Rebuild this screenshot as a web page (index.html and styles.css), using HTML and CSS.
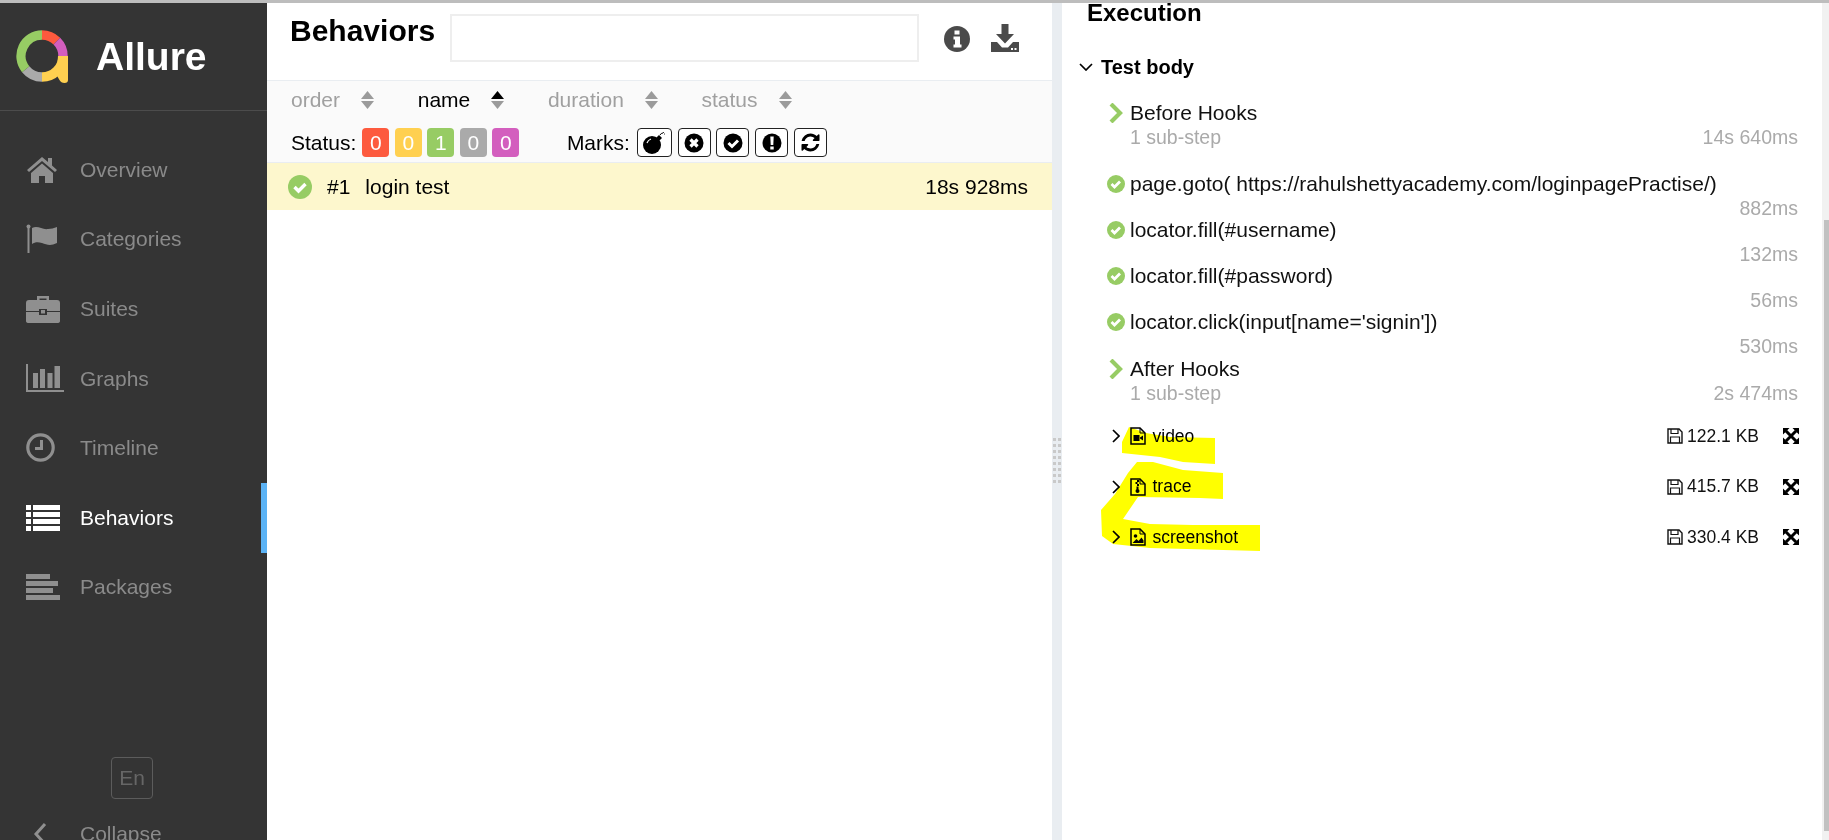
FILE: index.html
```html
<!DOCTYPE html>
<html lang="en">
<head>
<meta charset="utf-8">
<title>Allure Report</title>
<link rel="stylesheet" href="styles.css">
</head>
<body>
<div class="app">
  <aside class="sidebar">
    <div class="brand">
      <svg class="logo" viewBox="0 0 54 54" width="54" height="54">
        <g fill="none" stroke-width="9.4">
          <path stroke="#fd5a3e" d="M26 5A21 21 0 0 1 40.85 11.15"/>
          <path stroke="#d35ebe" d="M40.85 11.15A21 21 0 0 1 47 26"/>
          <path stroke="#ffd050" d="M47 26A21 21 0 0 1 26 47"/>
          <path stroke="#aaaaaa" d="M26 47A21 21 0 0 1 9.7 39.2"/>
          <path stroke="#97cc64" d="M9.7 39.2A21 21 0 0 1 26 5"/>
        </g>
        <path fill="#ffd050" d="M42 26h10v24q0 3-3.5 3t-5-3l-3-5z"/>
      </svg>
      <span class="brand-name">Allure</span>
    </div>
    <nav class="nav">
      <a class="nav-item">
        <span class="nav-icon"><svg viewBox="0 0 32 28" width="32" height="28"><path d="M16 1 1 14l2 2L16 5l13 11 2-2-5-4.5V2h-4v4zM5 17v10h8v-7h6v7h8V17L16 7.5z"/></svg></span>
        <span>Overview</span>
      </a>
      <a class="nav-item">
        <span class="nav-icon"><svg viewBox="0 0 34 30" width="34" height="30"><path d="M1.500 3h2v26h-2z"/><circle cx="2.500" cy="2.500" r="2"/><path d="M6 4c6-3 10 2 16 1 3 0 6-1 9-2v16c-6 3-10 2-15 0-4-1-7-1-10 1z"/></svg></span>
        <span>Categories</span>
      </a>
      <a class="nav-item">
        <span class="nav-icon"><svg viewBox="0 0 34 30" width="34" height="30"><path d="M11 6V2h12v4h8q3 0 3 3v8H21v-2h-8v2H0V9q0-3 3-3zm2.500 0h7V4.500h-7zM0 18h13v3h8v-3h13v9q0 2-3 2H3q-3 0-3-2zm15-2h4v3.500h-4z"/></svg></span>
        <span>Suites</span>
      </a>
      <a class="nav-item">
        <span class="nav-icon"><svg viewBox="0 0 38 30" width="38" height="30"><path d="M0 0h2v26h36v2H0zM7 9h5v15H7zM14 5h5v19h-5zM21.500 9h5v15h-5zM28.500 2h5.500v22h-5.500z"/></svg></span>
        <span>Graphs</span>
      </a>
      <a class="nav-item">
        <span class="nav-icon"><svg viewBox="0 0 30 30" width="30" height="30"><circle cx="14.500" cy="14.500" r="12.700" fill="none" stroke="#8f8f8f" stroke-width="3.200"/><path d="M14 7h3v10h-8v-3h5z"/></svg></span>
        <span>Timeline</span>
      </a>
      <a class="nav-item is-active">
        <span class="nav-icon"><svg viewBox="0 0 34 28" width="34" height="28"><path d="M0 1h5v5H0zM7 1h27v5H7zM0 8h5v5H0zM7 8h27v5H7zM0 15h5v5H0zM7 15h27v5H7zM0 22h5v5H0zM7 22h27v5H7z"/></svg></span>
        <span>Behaviors</span>
      </a>
      <a class="nav-item">
        <span class="nav-icon"><svg viewBox="0 0 34 28" width="34" height="28"><path d="M0 1h24v5H0zM0 8h32v5H0zM0 15h27v5H0zM0 22h34v5H0z"/></svg></span>
        <span>Packages</span>
      </a>
    </nav>
    <div class="side-footer">
      <div class="lang-row"><span class="lang">En</span></div>
      <a class="collapse">
        <svg class="collapse-icon" viewBox="0 0 14 24" width="14" height="24"><path d="M12 2 3 12l9 10" fill="none" stroke="#8f8f8f" stroke-width="3"/></svg>
        <span>Collapse</span>
      </a>
    </div>
  </aside>

  <section class="pane-left">
    <header class="pane-header">
      <h2 class="pane-title">Behaviors</h2>
      <div class="search"></div>
      <svg class="tool tool-info" viewBox="0 0 26 26" width="26" height="26"><circle cx="13" cy="13" r="13" fill="#4a4a4a"/><path fill="#fff" d="M10.500 4.500h5v4h-5zM9.500 10.500h6.500v8h1.500v3h-8v-3H11v-5H9.500z"/></svg>
      <svg class="tool tool-download" viewBox="0 0 28 28" width="28" height="28"><path fill="#4a4a4a" d="M10.500 0h7v10H23L14 19.500 5 10h5.500zM0 18h6l5 5.500h6L22 18h6v10H0z"/><path fill="#fff" d="M20 24h2v2h-2zM23.500 24h2v2h-2z"/></svg>
    </header>
    <div class="toolbar">
      <div class="sort-row">
        <span class="sort"><span>order</span><svg class="sort-arrow" viewBox="0 0 13 18" width="13" height="18"><path class="a-off" d="M0 8 6.500 0 13 8z"/><path class="a-off" d="M0 10h13l-6.500 8z"/></svg></span>
        <span class="sort is-sorted"><span>name</span><svg class="sort-arrow" viewBox="0 0 13 18" width="13" height="18"><path class="a-on" d="M0 8 6.500 0 13 8z"/><path class="a-off" d="M0 10h13l-6.500 8z"/></svg></span>
        <span class="sort"><span>duration</span><svg class="sort-arrow" viewBox="0 0 13 18" width="13" height="18"><path class="a-off" d="M0 8 6.500 0 13 8z"/><path class="a-off" d="M0 10h13l-6.500 8z"/></svg></span>
        <span class="sort"><span>status</span><svg class="sort-arrow" viewBox="0 0 13 18" width="13" height="18"><path class="a-off" d="M0 8 6.500 0 13 8z"/><path class="a-off" d="M0 10h13l-6.500 8z"/></svg></span>
      </div>
      <div class="filter-row">
        <span class="filter-label">Status:</span>
        <span class="badge b-failed">0</span>
        <span class="badge b-broken">0</span>
        <span class="badge b-passed">1</span>
        <span class="badge b-skipped">0</span>
        <span class="badge b-unknown">0</span>
        <span class="filter-label marks-label">Marks:</span>
        <span class="mark mark-wide"><svg viewBox="0 0 24 24" width="24" height="24"><circle cx="10" cy="14" r="9"/><path d="m14 7 3-3 3 3-3 3z"/><path d="M18 4q1-2 3-2" fill="none" stroke="#000"/><path d="m21 1 1 1M22 3l1 0" stroke="#000" stroke-width=".8"/><path d="M5 12q1-3 4-4" fill="none" stroke="#fff" stroke-width="1.200"/></svg></span>
        <span class="mark"><svg viewBox="0 0 20 20" width="20" height="20"><circle cx="10" cy="10" r="9.500"/><path d="m6.500 6.500 7 7m0-7-7 7" stroke="#fff" stroke-width="3.200"/></svg></span>
        <span class="mark"><svg viewBox="0 0 20 20" width="20" height="20"><circle cx="10" cy="10" r="9.500"/><path d="m5.500 10 3.500 3.500 6-6" fill="none" stroke="#fff" stroke-width="3"/></svg></span>
        <span class="mark"><svg viewBox="0 0 20 20" width="20" height="20"><circle cx="10" cy="10" r="9.500"/><path fill="#fff" d="M8.300 3.500h3.400l-.4 8.500H8.700zM8.300 13.500h3.400v3H8.300z"/></svg></span>
        <span class="mark"><svg viewBox="0 0 1792 1792" width="21" height="21"><path d="M1639 1056q0 5-1 7-64 268-268 434.500t-478 166.500q-146 0-282.500-55t-243.500-157l-129 129q-19 19-45 19t-45-19-19-45v-448q0-26 19-45t45-19h448q26 0 45 19t19 45-19 45l-137 137q71 66 161 102t187 36q134 0 250-65t186-179q11-17 53-117 8-23 30-23h192q13 0 22.500 9.500t9.500 22.500zm25-800v448q0 26-19 45t-45 19h-448q-26 0-45-19t-19-45 19-45l138-138q-148-137-349-137-134 0-250 65t-186 179q-11 17-53 117-8 23-30 23h-199q-13 0-22.500-9.500t-9.500-22.500v-7q65-268 270-434.500t480-166.500q146 0 284 55.500t245 156.500l130-129q19-19 45-19t45 19 19 45z"/></svg></span>
      </div>
    </div>
    <div class="test-row">
      <svg class="row-check" viewBox="0 0 24 24" width="24" height="24"><circle cx="12" cy="12" r="12" fill="#97cc64"/><path d="m6.500 12 4 4 7-7" fill="none" stroke="#fff" stroke-width="3.400"/></svg>
      <span class="row-num">#1</span>
      <span class="row-name">login test</span>
      <span class="row-time">18s 928ms</span>
    </div>
  </section>

  <div class="divider"><div class="grip"></div></div>

  <section class="pane-right">
    <div class="exec">
      <h3 class="exec-title">Execution</h3>
      <div class="test-body">
        <svg viewBox="0 0 14 8" width="14" height="8"><path d="m1 1 6 6 6-6" fill="none" stroke="#000" stroke-width="1.700"/></svg>
        <span>Test body</span>
      </div>
      <div class="steps">
        <div class="step step-first">
          <svg class="step-icon" viewBox="0 0 18 20" width="18" height="20"><path d="m4 1 9 9-9 9" fill="none" stroke="#97cc64" stroke-width="4.200"/></svg>
          <span class="step-name">Before Hooks</span>
          <span class="step-sub">1 sub-step</span>
          <span class="step-time">14s 640ms</span>
        </div>
        <div class="step step-gap">
          <svg class="step-icon" viewBox="0 0 18 18" width="18" height="18"><circle cx="9" cy="9" r="9" fill="#97cc64"/><path d="m4.500 9 3 3 5.500-5.500" fill="none" stroke="#fff" stroke-width="2.800"/></svg>
          <span class="step-name">page.goto( https://rahulshettyacademy.com/loginpagePractise/)</span>
          <span class="step-sub"></span>
          <span class="step-time">882ms</span>
        </div>
        <div class="step">
          <svg class="step-icon" viewBox="0 0 18 18" width="18" height="18"><circle cx="9" cy="9" r="9" fill="#97cc64"/><path d="m4.500 9 3 3 5.500-5.500" fill="none" stroke="#fff" stroke-width="2.800"/></svg>
          <span class="step-name">locator.fill(#username)</span>
          <span class="step-sub"></span>
          <span class="step-time">132ms</span>
        </div>
        <div class="step">
          <svg class="step-icon" viewBox="0 0 18 18" width="18" height="18"><circle cx="9" cy="9" r="9" fill="#97cc64"/><path d="m4.500 9 3 3 5.500-5.500" fill="none" stroke="#fff" stroke-width="2.800"/></svg>
          <span class="step-name">locator.fill(#password)</span>
          <span class="step-sub"></span>
          <span class="step-time">56ms</span>
        </div>
        <div class="step">
          <svg class="step-icon" viewBox="0 0 18 18" width="18" height="18"><circle cx="9" cy="9" r="9" fill="#97cc64"/><path d="m4.500 9 3 3 5.500-5.500" fill="none" stroke="#fff" stroke-width="2.800"/></svg>
          <span class="step-name">locator.click(input[name='signin'])</span>
          <span class="step-sub"></span>
          <span class="step-time">530ms</span>
        </div>
        <div class="step step-last">
          <svg class="step-icon" viewBox="0 0 18 20" width="18" height="20"><path d="m4 1 9 9-9 9" fill="none" stroke="#97cc64" stroke-width="4.200"/></svg>
          <span class="step-name">After Hooks</span>
          <span class="step-sub">1 sub-step</span>
          <span class="step-time">2s 474ms</span>
        </div>
      </div>
      <div class="attachments">
        <div class="attachment">
          <svg class="att-chevron" viewBox="0 0 8 14" width="8" height="14"><path d="m1 1 6 6-6 6" fill="none" stroke="#000" stroke-width="1.700"/></svg>
          <svg class="att-file" viewBox="0 0 16 18" width="16" height="18"><path d="M1 1h9l5 5v11H1z" fill="none" stroke="#000" stroke-width="1.500"/><path d="M10 1v5h5" fill="none" stroke="#000"/><path d="M3.500 8h6v6h-6zM10 10.500l3-2v5l-3-2z"/></svg>
          <span class="att-name">video</span>
          <span class="att-size">
            <svg viewBox="0 0 16 16" width="16" height="16"><path d="M1 1h11l3 3v11H1z" fill="none" stroke="#111" stroke-width="1.400"/><path d="M4 1v4.500h7V1M3.500 15V9h9v6" fill="none" stroke="#111" stroke-width="1.200"/></svg>
            <span class="att-kb">122.1 KB</span>
          </span>
          <svg class="att-expand" viewBox="0 0 16 16" width="16" height="16"><path d="M0 0h6.500L0 6.500zM16 0v6.500L9.500 0zM0 16V9.500L6.500 16zM16 16H9.500L16 9.500z"/><path d="m3 3 10 10M13 3 3 13" stroke="#000" stroke-width="3"/></svg>
        </div>
        <div class="attachment">
          <svg class="att-chevron" viewBox="0 0 8 14" width="8" height="14"><path d="m1 1 6 6-6 6" fill="none" stroke="#000" stroke-width="1.700"/></svg>
          <svg class="att-file" viewBox="0 0 16 18" width="16" height="18"><path d="M1 1h9l5 5v11H1z" fill="none" stroke="#000" stroke-width="1.500"/><path d="M10 1v5h5" fill="none" stroke="#000"/><path d="M7 2h2v2H7zM5.500 4h2v2h-2zM7 6h2v2H7zM6.500 8.500h2v3h-2z"/><circle cx="7.500" cy="13" r="2"/></svg>
          <span class="att-name">trace</span>
          <span class="att-size">
            <svg viewBox="0 0 16 16" width="16" height="16"><path d="M1 1h11l3 3v11H1z" fill="none" stroke="#111" stroke-width="1.400"/><path d="M4 1v4.500h7V1M3.500 15V9h9v6" fill="none" stroke="#111" stroke-width="1.200"/></svg>
            <span class="att-kb">415.7 KB</span>
          </span>
          <svg class="att-expand" viewBox="0 0 16 16" width="16" height="16"><path d="M0 0h6.500L0 6.500zM16 0v6.500L9.500 0zM0 16V9.500L6.500 16zM16 16H9.500L16 9.500z"/><path d="m3 3 10 10M13 3 3 13" stroke="#000" stroke-width="3"/></svg>
        </div>
        <div class="attachment">
          <svg class="att-chevron" viewBox="0 0 8 14" width="8" height="14"><path d="m1 1 6 6-6 6" fill="none" stroke="#000" stroke-width="1.700"/></svg>
          <svg class="att-file" viewBox="0 0 16 18" width="16" height="18"><path d="M1 1h9l5 5v11H1z" fill="none" stroke="#000" stroke-width="1.500"/><path d="M10 1v5h5" fill="none" stroke="#000"/><circle cx="5.500" cy="8" r="1.800"/><path d="m2.500 15 4-4 2 2 3-3.500 2 3V15z"/></svg>
          <span class="att-name">screenshot</span>
          <span class="att-size">
            <svg viewBox="0 0 16 16" width="16" height="16"><path d="M1 1h11l3 3v11H1z" fill="none" stroke="#111" stroke-width="1.400"/><path d="M4 1v4.500h7V1M3.500 15V9h9v6" fill="none" stroke="#111" stroke-width="1.200"/></svg>
            <span class="att-kb">330.4 KB</span>
          </span>
          <svg class="att-expand" viewBox="0 0 16 16" width="16" height="16"><path d="M0 0h6.500L0 6.500zM16 0v6.500L9.500 0zM0 16V9.500L6.500 16zM16 16H9.500L16 9.500z"/><path d="m3 3 10 10M13 3 3 13" stroke="#000" stroke-width="3"/></svg>
        </div>
      </div>
      <svg class="marker" viewBox="1062 3 300 600" width="300" height="600">
        <path fill="#ffff00" d="M1122 453V442L1129 427 1146 433 1170 437 1215 438V464L1183 462 1160 457z"/>
        <path fill="#ffff00" d="M1137 462 1153 462 1183 470 1223 473V499L1200 498 1138 497 1123 519 1150 524 1193 525 1260 525V551L1150 548 1113 544 1102 536 1101 510 1115 494 1128 473z"/>
      </svg>
    </div>
    <div class="scrollbar"><div class="thumb"></div></div>
  </section>
</div>
</body>
</html>
```

FILE: styles.css
```css
* { box-sizing: border-box; }
html, body { margin: 0; height: 100%; overflow: hidden; }
body {
  font-family: "Liberation Sans", Arial, sans-serif;
  color: #000;
  background: #fff;
}
.app {
  display: flex;
  height: 840px;
  width: 1829px;
  border-top: 3px solid #bdbdbd;
}

/* Sidebar */
.sidebar {
  width: 267px;
  flex: none;
  background: #343434;
  display: flex;
  flex-direction: column;
  overflow: hidden;
}
.brand {
  height: 108px;
  flex: none;
  display: flex;
  align-items: center;
  padding-left: 16px;
  border-bottom: 1px solid #4c4c4c;
}
.brand-name {
  margin-left: 26px;
  font-size: 39px;
  font-weight: 700;
  color: #fff;
}
.nav { margin-top: 24px; flex: 1; }
.nav-item {
  height: 69.6px;
  display: flex;
  align-items: center;
  padding-left: 26px;
  border-right: 6px solid transparent;
  font-size: 21px;
  color: #8a8a8a;
}
.nav-icon {
  width: 54px;
  flex: none;
  display: flex;
  align-items: center;
}
.nav-icon svg { fill: #8f8f8f; display: block; }
.nav-item.is-active { color: #fff; border-right-color: #5cb3f5; }
.nav-item.is-active .nav-icon svg { fill: #fff; }
.side-footer { height: 93px; flex: none; }
.lang-row { display: flex; justify-content: center; padding: 10px 3px 0 0; }
.lang {
  width: 42px;
  height: 42px;
  border: 1px solid #5c5c5c;
  border-radius: 4px;
  display: flex;
  align-items: center;
  justify-content: center;
  font-size: 21px;
  color: #666;
}
.collapse {
  height: 70px;
  display: flex;
  align-items: center;
  padding-left: 33px;
  font-size: 21px;
  color: #8a8a8a;
}
.collapse-icon { margin-right: 33px; }

/* Left pane */
.pane-left {
  width: 785px;
  flex: none;
  display: flex;
  flex-direction: column;
}
.pane-header {
  height: 78px;
  flex: none;
  display: flex;
  align-items: flex-start;
  padding: 11px 0 0 23px;
  border-bottom: 1px solid #e9edf1;
}
.pane-title {
  margin: 0;
  width: 160px;
  font-size: 30px;
  line-height: 34px;
  font-weight: 700;
}
.search {
  width: 469px;
  height: 48px;
  border: 2px solid #eeeeee;
}
.tool { flex: none; margin-top: 12px; }
.tool-info { margin-left: 25px; }
.tool-download { margin-left: 21px; margin-top: 10px; }
.toolbar {
  height: 82px;
  flex: none;
  background: #fafafa;
  border-bottom: 1px solid #e9edf1;
  padding-left: 24px;
}
.sort-row {
  height: 38px;
  display: flex;
  align-items: center;
  gap: 43.7px;
  font-size: 21px;
  color: #a0a0a0;
}
.sort { display: flex; align-items: center; gap: 21px; }
.sort.is-sorted { color: #000; }
.a-off { fill: #9b9b9b; }
.a-on { fill: #000; }
.filter-row {
  height: 43px;
  padding-top: 4px;
  display: flex;
  align-items: center;
  font-size: 21px;
}
.filter-label { margin-right: 6px; }
.marks-label { margin-left: 42px; margin-right: 7px; }
.badge {
  width: 27px;
  height: 29px;
  margin-right: 5.5px;
  border-radius: 4px;
  display: flex;
  align-items: center;
  justify-content: center;
  color: #fff;
  font-size: 21px;
}
.b-failed { background: #fd5a3e; }
.b-broken { background: #ffd050; }
.b-passed { background: #97cc64; }
.b-skipped { background: #aaaaaa; }
.b-unknown { background: #d35ebe; }
.mark {
  width: 33px;
  height: 29px;
  margin-right: 5.75px;
  border: 1px solid #222;
  border-radius: 4px;
  background: #fff;
  display: flex;
  align-items: center;
  justify-content: center;
}
.mark-wide { width: 35px; }
.mark svg { display: block; }
.test-row {
  height: 47px;
  flex: none;
  display: flex;
  align-items: center;
  padding: 0 24px 0 21px;
  background: #fdf7cd;
  font-size: 21px;
}
.row-check { margin-right: 15px; }
.row-num { margin-right: 15px; }
.row-name { flex: 1; }

/* Divider */
.divider {
  width: 10px;
  flex: none;
  background: #e9edf1;
  padding: 435px 0 0 1px;
}
.grip {
  width: 8px;
  height: 48px;
  background-image:
    linear-gradient(to right, transparent 0 3px, #e9edf1 3px 5px, transparent 5px),
    repeating-linear-gradient(to bottom, #c9c9c9 0 3px, transparent 3px 6px);
}

/* Right pane */
.pane-right {
  flex: 1;
  display: flex;
  min-width: 0;
}
.exec {
  flex: 1;
  min-width: 0;
  position: relative;
  padding-left: 25px;
}
.exec-title {
  margin: 0;
  height: 20px;
  font-size: 24px;
  line-height: 20px;
  font-weight: 700;
}
.test-body {
  margin: 30px 0 0 -8px;
  height: 28px;
  display: flex;
  align-items: center;
  gap: 8px;
  font-size: 20px;
  font-weight: 700;
}
.steps {
  margin: 20px 24px 0 20px;
  font-size: 21px;
}
.step {
  display: grid;
  grid-template-columns: 23px 1fr auto;
  grid-auto-rows: 23px;
  line-height: 23px;
  height: 46px;
}
.step-gap { margin-top: 25px; }
.step-last { margin-top: 1px; }
.step-icon { align-self: center; grid-row: 1; grid-column: 1; }
.step-name { grid-row: 1; grid-column: 2 / 4; color: #111; white-space: nowrap; }
.step-sub { grid-row: 2; grid-column: 2; padding-top: 2px; color: #aaaaaa; font-size: 19.5px; }
.step-time { grid-row: 2; grid-column: 3; padding-top: 2px; color: #aaaaaa; font-size: 19.5px; }
.attachments { margin: 8px 23px 0 24.5px; }
.attachment {
  height: 50.5px;
  display: flex;
  align-items: center;
  font-size: 17.5px;
}
.att-chevron { margin-right: 10.5px; flex: none; }
.att-file { margin-right: 6.5px; flex: none; }
.att-name { flex: 1; }
.att-size { display: flex; align-items: center; gap: 3px; }
.att-kb { width: 73px; text-align: right; color: #111; }
.att-expand { margin-left: 24px; flex: none; }
.marker {
  position: absolute;
  left: 0;
  top: 0;
  mix-blend-mode: multiply;
  pointer-events: none;
}
.scrollbar {
  width: 7px;
  flex: none;
  background: #f1f1f1;
  padding: 217px 0 9px 2px;
}
.thumb { height: 100%; background: #c1c1c1; }
```
